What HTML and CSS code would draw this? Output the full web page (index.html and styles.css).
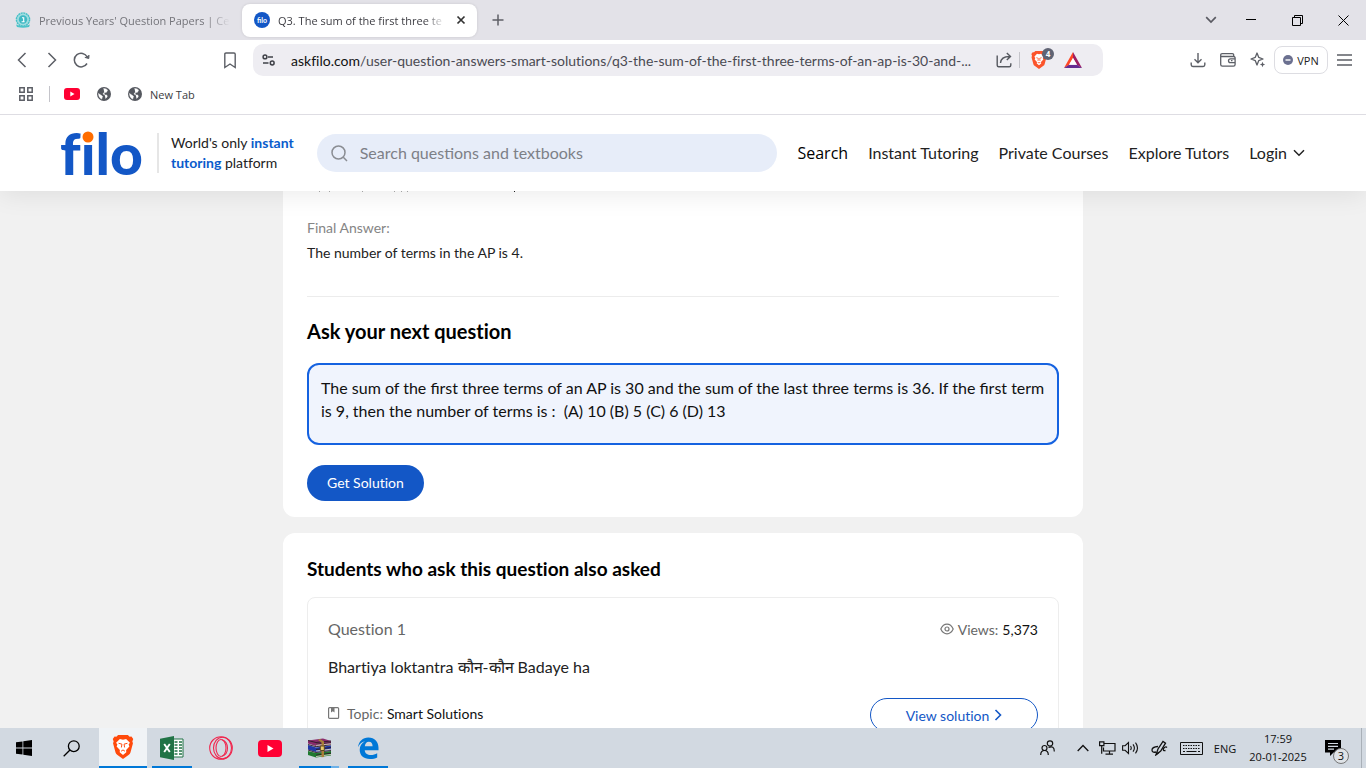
FILE: index.html
```html
<!DOCTYPE html>
<html lang="en">
<head>
  <meta charset="UTF-8" />
  <meta name="viewport" content="width=device-width, initial-scale=1.0"/>
  <title>Q3. The sum of the first three terms</title>
  <link rel="stylesheet" href="styles.css">
</head>
<body>
  <div class="tab-strip">
    <a href="#" class="tab">
      <svg width="16" height="16" viewBox="0 0 16 16"><circle cx="8" cy="7.5" r="6.6" fill="#9fdde0" stroke="#45bfc6" stroke-width="1.4" stroke-dasharray="2 .6"/><circle cx="8" cy="7.5" r="4.2" fill="#3fb9c4"/><path d="M7 5.8h1.7v3.7M6.6 9.8h3" stroke="#fff" stroke-width="1.1" fill="none"/><path d="M1 12.5q7 3 14 0l-1 2.5q-6 1.6-12 0z" fill="#4cc3c9"/></svg>
      <span class="tab-title">Previous Years' Question Papers | Ce</span>
    </a>
    <a href="#" class="tab active">
      <svg width="16" height="16" viewBox="0 0 16 16"><circle cx="8" cy="8" r="8" fill="#1357c6"/><text x="8" y="11" text-anchor="middle" class="favicon-text">filo</text></svg>
      <span class="tab-title">Q3. The sum of the first three te</span>
      <button class="tab-close" aria-label="Close tab"><svg width="10" height="10" viewBox="0 0 10 10"><path d="M1.5 1.5l7 7M8.5 1.5l-7 7" stroke="#333" stroke-width="1.7"/></svg></button>
    </a>
    <button class="new-tab" aria-label="New tab"><svg width="12" height="12" viewBox="0 0 12 12"><path d="M6 .5v11M.5 6h11" stroke="#5f5f66" stroke-width="1.5"/></svg></button>
    <div class="window-controls">
      <button class="tab-search" aria-label="Search tabs"><svg width="12" height="8" viewBox="0 0 12 8"><path d="M1.2 1.2L6 6l4.8-4.8" fill="none" stroke="#5a5a62" stroke-width="1.7"/></svg></button>
      <button aria-label="Minimize"><svg width="10" height="10" viewBox="0 0 10 10"><path d="M0 4.5h10" stroke="#000"/></svg></button>
      <button aria-label="Restore"><svg width="11" height="11" viewBox="0 0 11 11"><path d="M.5 2.5h8v8h-8zM2.5 2.5v-2h8v8h-2" fill="none" stroke="#000"/></svg></button>
      <button aria-label="Close"><svg width="11" height="11" viewBox="0 0 11 11"><path d="M.5 .5l10 10M10.5 .5l-10 10" stroke="#000"/></svg></button>
    </div>
  </div>

  <div class="toolbar">
    <button aria-label="Back"><svg width="10" height="16" viewBox="0 0 10 16"><path d="M8.5 1L1.5 8l7 7" fill="none" stroke="#5c5f66" stroke-width="1.5"/></svg></button>
    <button aria-label="Forward"><svg width="10" height="16" viewBox="0 0 10 16"><path d="M1.5 1l7 7-7 7" fill="none" stroke="#5c5f66" stroke-width="1.5"/></svg></button>
    <button aria-label="Reload"><svg width="18" height="16" viewBox="0 0 18 16"><path d="M14.2 5A6.8 6.8 0 1 0 14 11.5" fill="none" stroke="#5c5f66" stroke-width="1.5"/><path d="M11.8 5.4l4 1.1.2-3.500" fill="#5c5f66" stroke="#5c5f66"/></svg></button>
    <button class="bookmark" aria-label="Bookmark"><svg width="12" height="17" viewBox="0 0 12 17"><path d="M2 1h8q1.2 0 1.2 1.2V15.5L6 12 .8 15.5V2.2Q.8 1 2 1z" fill="none" stroke="#5c5f66" stroke-width="1.4"/></svg></button>
    <div class="address">
      <svg width="14" height="12" viewBox="0 0 14 12" fill="none" stroke="#3f4148" stroke-width="1.5"><circle cx="3" cy="2.9" r="1.9"/><path d="M6 2.9h5M1 9h5.5"/><circle cx="10.2" cy="9" r="1.9"/></svg>
      <span class="url"><b>askfilo.com</b>/user-question-answers-smart-solutions/q3-the-sum-of-the-first-three-terms-of-an-ap-is-30-and-...</span>
      <button class="share" aria-label="Share"><svg width="17" height="16" viewBox="0 0 17 16" fill="none" stroke="#55585f" stroke-width="1.4"><path d="M1.2 3.5v9.800q0 1.500 1.500 1.500h10.600q1.500 0 1.500-1.500v-2M4.500 11q.5-6.500 9-6.500M10.800 1l3.700 3.500-3.700 3.500"/></svg></button>
      <span class="divider"></span>
      <button class="shield" aria-label="Shields">
        <svg width="16" height="18" viewBox="0 0 24 27"><path d="M6.500 0h11l2 2 2-.3 2 2.800-1 2.800.7 2-2.800 10.500q-.5 1.600-1.800 2.500L12 27l-6.600-4.700q-1.300-.9-1.800-2.500L.8 9.300l.7-2-1-2.800 2-2.800 2 .3z" fill="#fb542b"/><path d="M12 5l3-.7 4 4.500-1.500 1.800 1 2-3.500 4 .3 2L12 21.500l-3.300-2.900.3-2-3.500-4 1-2L5 8.800l4-4.500z" fill="#fff"/><path d="M8 10l3 1-.5 4M16 10l-3 1 .5 4M10 17.500h4" stroke="#fb542b" stroke-width="1.200" fill="none"/></svg>
        <span class="badge">4</span>
      </button>
      <button class="rewards" aria-label="Rewards"><svg width="18" height="16" viewBox="0 0 18 16"><path d="M9 0L0 16l5-3 4-7z" fill="#ff4724"/><path d="M9 0l9 16-5-3-4-7z" fill="#9e1f63"/><path d="M0 16h18l-5-3.200H5z" fill="#662d91"/><path d="M9 6l4 6.800H5z" fill="#fff"/></svg></button>
    </div>
    <div class="tools">
      <button aria-label="Downloads"><svg width="16" height="16" viewBox="0 0 16 16" fill="none" stroke="#5c5f66" stroke-width="1.400"><path d="M8 1v9.500M4.500 7.300L8 10.700l3.500-3.400M1.200 10.500v2.300q0 1.700 1.700 1.700h10.200q1.700 0 1.700-1.700v-2.300"/></svg></button>
      <button aria-label="Wallet"><svg width="16" height="14" viewBox="0 0 16 14" fill="none" stroke="#5c5f66" stroke-width="1.300"><path d="M13.700 3.500V2.200Q13.700.7 12.200.7H2.200Q.7.700.7 2.200v9.300q0 1.700 1.700 1.700h11q1.700 0 1.700-1.700V5q0-1.500-1.500-1.500H1M15 5.800h-4.500q-2 0-2 1.900t2 1.900H15"/><path d="M11 7.700h1.500"/></svg></button>
      <button aria-label="Assistant"><svg width="16" height="16" viewBox="0 0 16 16"><path d="M7 1l1.700 4.300L13 7 8.700 8.700 7 13 5.300 8.700 1 7l4.300-1.700z" fill="none" stroke="#5c5f66" stroke-width="1.300" stroke-linejoin="round"/><path d="M12.500 9.800l.8 1.900 1.900.8-1.900.8-.8 1.900-.8-1.900-1.900-.8 1.900-.8z" fill="#5c5f66"/></svg></button>
      <button class="vpn"><svg width="10" height="10" viewBox="0 0 10 10"><circle cx="5" cy="5" r="5" fill="#6b7090"/><path d="M2.500 5h5" stroke="#fff" stroke-width="1.400"/></svg>VPN</button>
      <button aria-label="Menu"><svg width="15" height="12" viewBox="0 0 15 12"><path d="M0 1h15M0 6h15M0 11h15" stroke="#5c5f66" stroke-width="1.300"/></svg></button>
    </div>
  </div>

  <div class="bookmarks">
    <button aria-label="Apps"><svg width="14" height="14" viewBox="0 0 14 14" fill="none" stroke="#5c5f66" stroke-width="1.500"><path d="M.8.800h4.400v4.400H.8zM8.800.800h4.400v4.400H8.800zM.8 8.800h4.400v4.400H.8zM8.800 8.800h4.400v4.400H8.800z"/></svg></button>
    <span class="divider"></span>
    <a href="#" aria-label="YouTube"><svg width="16" height="12" viewBox="0 0 16 12"><rect width="16" height="12" rx="3" fill="#ff0033"/><path d="M6.300 3.500v5l4.200-2.500z" fill="#fff"/></svg></a>
    <a href="#" aria-label="Site"><svg width="14" height="14" viewBox="0 0 14 14"><circle cx="7" cy="7" r="7" fill="#55585f"/><path d="M6.500 1.500q3 0 4 1.500l-1 2.200-2.500.3-1 1.500 2 1h1.800l.4 2-1.700 1.500M1.500 6.500l4 2.800-.8 2.800Q1.500 10.500 1.500 6.500z" fill="#fff" stroke="#fff" stroke-width=".5"/></svg></a>
    <a href="#"><svg width="14" height="14" viewBox="0 0 14 14"><circle cx="7" cy="7" r="7" fill="#55585f"/><path d="M6.500 1.500q3 0 4 1.500l-1 2.200-2.500.3-1 1.500 2 1h1.800l.4 2-1.700 1.500M1.500 6.500l4 2.800-.8 2.800Q1.500 10.500 1.500 6.500z" fill="#fff" stroke="#fff" stroke-width=".5"/></svg>New Tab</a>
  </div>

  <div class="page">
    <header class="site-header">
      <a href="#" class="brand">
        <svg width="84" height="50" viewBox="0 0 84 50"><text x="-1" y="47" class="logo-text">filo</text><circle cx="27" cy="9" r="6" fill="#fff"/><circle cx="27" cy="9" r="5.500" fill="#ff6d00"/></svg>
      </a>
      <p class="tagline">World's only <b>instant</b><br><b>tutoring</b> platform</p>
      <label class="search">
        <svg width="17" height="17" viewBox="0 0 17 17" fill="none" stroke="#8a8d93" stroke-width="1.500"><circle cx="7.500" cy="7.500" r="6.500"/><path d="M12.300 12.300l3.700 3.700"/></svg>
        <input type="text" placeholder="Search questions and textbooks" aria-label="Search questions and textbooks">
      </label>
      <nav>
        <a href="#" class="current">Search</a>
        <a href="#">Instant Tutoring</a>
        <a href="#">Private Courses</a>
        <a href="#">Explore Tutors</a>
        <a href="#" class="login">Login <svg width="12" height="8" viewBox="0 0 12 8"><path d="M1 1.200l5 5 5-5" fill="none" stroke="#222" stroke-width="1.500"/></svg></a>
      </nav>
    </header>

    <main>
      <section class="card answer">
        <svg class="cut-line" width="210" height="1" viewBox="0 0 210 1"><path d="M12 .5h1M22 .5h1M55 .5h1M87 .5h1M94 .5h1M100 .5h1" stroke="#aaa"/><path d="M207 .5h1" stroke="#222"/></svg>
        <h3>Final Answer:</h3>
        <p>The number of terms in the AP is 4.</p>
        <hr>
        <h2><label for="next-question">Ask your next question</label></h2>
        <textarea id="next-question" spellcheck="false">The sum of the first three terms of an AP is 30 and the sum of the last three terms is 36. If the first term is 9, then the number of terms is :  (A) 10 (B) 5 (C) 6 (D) 13</textarea>
        <button class="get-solution">Get Solution</button>
      </section>

      <section class="card related">
        <h2>Students who ask this question also asked</h2>
        <article class="question">
          <div class="row">
            <span class="number">Question 1</span>
            <span class="meta"><svg width="14" height="12" viewBox="0 0 14 12" fill="none" stroke="#777" stroke-width="1.200"><path d="M.8 6Q3 1.200 7 1.200T13.200 6Q11 10.800 7 10.800T.8 6z"/><circle cx="7" cy="6" r="2"/></svg>Views: <b>5,373</b></span>
          </div>
          <p>Bhartiya loktantra कौन-कौन Badaye ha</p>
          <div class="row">
            <span class="meta topic"><svg width="12" height="12" viewBox="0 0 12 12"><rect x=".6" y=".6" width="10" height="10.800" rx="1" fill="none" stroke="#777" stroke-width="1.200"/><path d="M3 1h3.500v4.500L4.800 4.300 3 5.500z" fill="#777"/></svg>Topic: <b>Smart Solutions</b></span>
            <a href="#" class="view-solution">View solution <svg width="8" height="12" viewBox="0 0 8 12"><path d="M1.500 1l5 5-5 5" fill="none" stroke="#1357c6" stroke-width="1.600"/></svg></a>
          </div>
        </article>
      </section>
    </main>
  </div>

  <footer class="taskbar">
    <button class="app" aria-label="Start"><svg width="16" height="16" viewBox="0 0 16 16"><path d="M0 2.300l6.500-.9v6.200H0zM7.300 1.300L16 0v7.600H7.300zM0 8.400h6.500v6.200L0 13.700zM7.300 8.400H16V16l-8.700-1.300z"/></svg></button>
    <button class="app find" aria-label="Search"><svg width="17" height="17" viewBox="0 0 17 17" fill="none" stroke="#000" stroke-width="1.300"><circle cx="10.800" cy="6.200" r="5.400"/><path d="M7 10L.7 16.300"/></svg></button>
    <button class="app open current" aria-label="Brave"><svg width="22" height="24" viewBox="0 0 24 27"><path d="M6.500 0h11l2 2 2-.3 2 2.800-1 2.800.7 2-2.800 10.500q-.5 1.600-1.800 2.500L12 27l-6.600-4.700q-1.300-.9-1.800-2.500L.8 9.300l.7-2-1-2.800 2-2.800 2 .3z" fill="#ff4a0c"/><path d="M8.500 4.500l3.500.8 3.500-.8 4.300 4.300-1.500 2 .9 2-3.700 4.200.2 2.300L12 22.500l-3.700-3.200.2-2.300-3.700-4.200.9-2-1.500-2z" fill="#fff"/><path d="M7 9.300l3.800 1-.6 3.700M17 9.300l-3.800 1 .6 3.700M9.800 18.300l2.200-1.500 2.200 1.500" stroke="#ff4a0c" stroke-width="1.100" fill="none"/></svg></button>
    <button class="app open" aria-label="Excel"><svg width="24" height="24" viewBox="0 0 24 24"><path d="M13 3h10v18H13z" fill="#fff" stroke="#217346"/><path d="M14.500 6h3M19 6h3M14.500 9h3M19 9h3M14.500 12h3M19 12h3M14.500 15h3M19 15h3M14.500 18h3M19 18h3" stroke="#217346" stroke-width="1.500"/><path d="M0 2.700L14 0v24L0 21.300z" fill="#217346"/><path d="M4.200 8l5.600 8M9.800 8l-5.600 8" stroke="#fff" stroke-width="1.900"/></svg></button>
    <button class="app" aria-label="Opera"><svg width="24" height="24" viewBox="0 0 24 24" fill="none" stroke="#f0274e" stroke-width="1.100"><circle cx="12" cy="12" r="11.300"/><ellipse cx="13.500" cy="12" rx="9" ry="10.800"/><ellipse cx="12" cy="12" rx="5" ry="8.500"/><path d="M13 3.700q5.500 2 5.500 8.300T13 20.300"/></svg></button>
    <button class="app" aria-label="YouTube"><svg width="24" height="17" viewBox="0 0 24 17"><rect width="24" height="17" rx="4" fill="#ff0033"/><path d="M9.500 5v7l6-3.500z" fill="#fff"/></svg></button>
    <button class="app open stacked" aria-label="WinRAR"><svg width="25" height="20" viewBox="0 0 25 20"><path d="M1 2.500L16 .5l8 2.500v3.500L9 8 1 5.500z" fill="#8a2c6c"/><path d="M1 7l8 2.500L24 7.500V12L9 14l-8-2.500z" fill="#2038a8"/><path d="M1 13l8 2 15-2v4.500L9 19.500 1 17z" fill="#1f7a30"/><path d="M1 2.500L9 4.500 24 3M9 6.300l15-1.600M1 6.500L9 8.700l15-1.900M9 11.500l15-2M1 12l8 2.500 15-2M9 17.200l15-2" stroke="#2b1c26" stroke-width=".9" fill="none"/><path d="M9 7.300l15-1.500M9 13l15-1.800M9 18.500l15-2" stroke="#dcd6c8" stroke-width=".9"/><path d="M13 1l4 2.500V19l-2.500.3V4.500L11 2z" fill="#a97f38"/><path d="M13.300 8h4v4.500h-4z" fill="#e8c96a" stroke="#54401c" stroke-width=".9"/></svg></button>
    <button class="app open" aria-label="Edge"><svg width="22" height="22" viewBox="0 0 22 22"><path d="M1 10.300C1.700 4.200 5.800.4 11.300.4c6.500 0 10.200 4.600 10.200 10.400v2.500H7.700c.2 3.200 2.700 4.700 6 4.700 2.500 0 4.600-.7 6.500-1.800v4.300c-2 1-4.400 1.500-7.200 1.500-6.500 0-10.300-3.500-10.300-9.200 0-3.700 2-6.800 5.400-8.500C4.700 5.200 2.500 7 1 10.300zM7.800 9.300h7.800c0-2.700-1.200-4.500-3.700-4.500-2.400 0-3.800 1.900-4.100 4.500z" fill="#0078d7"/></svg></button>

    <div class="tray">
      <button class="people" aria-label="People"><svg width="15" height="16" viewBox="0 0 15 16" fill="none" stroke="#111" stroke-width="1.200"><circle cx="10" cy="3.500" r="2.700"/><circle cx="4.500" cy="8" r="2.500"/><path d="M.7 15q0-4.500 3.800-4.500T8.300 15M8.500 7.500q5.800-2.500 5.800 4"/></svg></button>
      <button aria-label="Show hidden icons"><svg width="12" height="8" viewBox="0 0 12 8"><path d="M.7 7L6 1.500 11.300 7" fill="none" stroke="#111" stroke-width="1.300"/></svg></button>
      <button aria-label="Network"><svg width="17" height="14" viewBox="0 0 17 14" fill="none" stroke="#111" stroke-width="1.200"><path d="M5 2.500h11v7.500H4.500V6.500M10.500 10v3M6.500 13.200h7.500M.6.800h4.300v3.900H.6zM2.700 4.700v8"/></svg></button>
      <button aria-label="Volume"><svg width="18" height="14" viewBox="0 0 18 14" fill="none" stroke="#111" stroke-width="1.100"><path d="M.6 4.700h2.500L6.500 1.500v11L3.100 9.300H.6zM8.500 5q1.500 2 0 4M11 3.300q2.800 3.700 0 7.400M13.500 1.700q4 5.300 0 10.600"/></svg></button>
      <button class="pen" aria-label="Pen"><svg width="17" height="16" viewBox="0 0 17 16" fill="none" stroke="#111" stroke-width="1.300"><path d="M5 14.800L7 9l5-7.500 2.500 1.700L9.700 11z"/><path d="M7 6.500Q1 7 1 10t4 2M16 7.500q-1.500-1.500-3.500 1-1 2.500 2 2M5 14.800l3-2.500"/></svg></button>
      <button class="keyboard" aria-label="Touch keyboard"><svg width="23" height="13" viewBox="0 0 23 13" fill="none" stroke="#111"><path d="M.5.500h22v12H.5z"/><path d="M3 3.500h17M3 6.500h17" stroke-dasharray="1.500 1"/><path d="M3 9.500h2M6.500 9.500h10M18 9.500h2"/></svg></button>
      <span class="language">ENG</span>
      <span class="clock">17:59<br>20-01-2025</span>
      <button class="notifications" aria-label="Notifications"><svg width="16" height="16" viewBox="0 0 16 16"><path d="M0 0h16v12.500H8.500L5 16v-3.500H0z"/><path d="M3 3.500h10M3 6.300h10M3 9.100h6" stroke="#d2d9e1" stroke-width="1.200"/></svg><span class="count">3</span></button>
    </div>
  </footer>
</body>
</html>
```
FILE: styles.css
```css
* {
  margin: 0;
  padding: 0;
  box-sizing: border-box;
}

body {
  display: flex;
  flex-direction: column;
  height: 100vh;
  overflow: hidden;
  font-family: Lato, sans-serif;
  font-size: 14px;
  font-variant-ligatures: none;
  color: #222;
  background: #fff;
}

a {
  color: inherit;
  text-decoration: none;
}

button {
  display: flex;
  align-items: center;
  justify-content: center;
  border: none;
  background: none;
  color: inherit;
  font: inherit;
}

svg {
  flex: none;
}

.tab-strip,
.toolbar,
.bookmarks,
.taskbar {
  display: flex;
  align-items: center;
  flex: none;
  font-family: "Open Sans", sans-serif;
  font-size: 11px;
}

/* tabs */
.tab-strip {
  height: 40px;
  padding-left: 3px;
  background: #e3e2e8;
}

.tab {
  display: flex;
  align-items: center;
  gap: 8px;
  width: 239px;
  height: 33px;
  padding: 0 12px;
  border-radius: 8px;
  color: #74747a;
}

.tab.active {
  width: 235px;
  padding-right: 8px;
  background: #fff;
  color: #3c3c42;
  box-shadow: 0 0 3px rgba(0,0,0,0.12);
}

.tab-title {
  flex: 1;
  white-space: nowrap;
  -webkit-mask-image: linear-gradient(90deg, #000 88%, transparent);
  mask-image: linear-gradient(90deg, #000 88%, transparent);
}

.tab-close {
  width: 16px;
  height: 16px;
}

.new-tab {
  width: 42px;
  height: 40px;
}

.favicon-text {
  font: 700 7px Lato, sans-serif;
  fill: #fff;
}

.window-controls {
  display: flex;
  margin-left: auto;
}

.window-controls button {
  width: 46px;
  height: 40px;
}

.window-controls .tab-search {
  width: 34px;
}

/* address bar */
.toolbar {
  height: 40px;
  padding: 0 7px;
}

.toolbar button {
  width: 30px;
  height: 30px;
}

.toolbar .bookmark {
  margin-left: 118px;
}

.address {
  display: flex;
  align-items: center;
  flex: 1;
  min-width: 0;
  height: 32px;
  margin: 0 80px 0 8px;
  padding: 0 15px 0 9px;
  border-radius: 10px;
  background: #eeedf2;
}

.url {
  flex: 1;
  min-width: 0;
  margin-left: 15px;
  overflow: hidden;
  white-space: nowrap;
  font-family: Lato, sans-serif;
  font-size: 14px;
  color: #4a4a52;
}

.url b {
  font-weight: 400;
  color: #111;
}

.divider {
  width: 1px;
  height: 16px;
  background: #c4c4ca;
}

.toolbar .shield {
  position: relative;
  width: 38px;
}

.badge {
  position: absolute;
  top: 3px;
  right: 4px;
  width: 12px;
  height: 12px;
  border-radius: 6px;
  background: #5f6373;
  color: #fff;
  font-size: 8px;
  font-weight: 700;
  line-height: 12px;
}

.tools {
  display: flex;
  align-items: center;
}

.toolbar .vpn {
  gap: 4px;
  width: 54px;
  height: 28px;
  margin: 0 1px;
  border: 1px solid #dddde2;
  border-radius: 8px;
}

.bookmarks {
  gap: 17px;
  height: 35px;
  padding: 0 19px 6px;
  border-bottom: 1px solid #dedde3;
  color: #3c3c42;
}

.bookmarks .divider {
  margin: 0 -3px 0 -1px;
}

.bookmarks a {
  display: flex;
  align-items: center;
  gap: 8px;
}

/* web page */
.page {
  flex: 1;
  min-height: 0;
  overflow: hidden;
  background: #f1f1f1;
}

.site-header {
  position: relative;
  display: flex;
  align-items: center;
  height: 76px;
  padding: 0 61px;
  background: #fff;
  box-shadow: 0 4px 24px rgba(0,0,0,0.08);
}

.brand {
  display: flex;
}

.logo-text {
  font: 900 57px Lato, sans-serif;
  font-variant-ligatures: none;
  fill: #1357c6;
}

.tagline {
  margin-left: 12px;
  padding-left: 12px;
  border-left: 2px solid #e6e6e6;
  line-height: 20px;
}

.tagline b {
  color: #0a5ccc;
}

.search {
  display: flex;
  align-items: center;
  flex: 1;
  gap: 12px;
  height: 38px;
  margin: 0 20px 0 23px;
  padding: 0 14px;
  border-radius: 19px;
  background: #e7edf9;
}

.search input {
  flex: 1;
  min-width: 0;
  padding-bottom: 2px;
  border: none;
  outline: none;
  background: none;
  font: 16px Lato, sans-serif;
}

.search input::placeholder {
  color: #7d8087;
}

nav {
  display: flex;
  align-items: baseline;
  gap: 20px;
  font-size: 16px;
}

nav .current {
  font-family: "Open Sans", sans-serif;
  color: #000;
}

.login {
  display: flex;
  align-items: center;
  gap: 6px;
}

main {
  display: flex;
  flex-direction: column;
  gap: 16px;
  max-width: 800px;
  margin: 0 auto;
}

.card {
  padding: 24px;
  border-radius: 12px;
  background: #fff;
}

.answer {
  padding: 0 24px 16px;
  border-radius: 0 0 12px 12px;
}

.cut-line {
  display: block;
}

h3 {
  margin-top: 26px;
  font-size: 14px;
  font-weight: 400;
  line-height: 20px;
  color: #858585;
}

.answer p {
  margin-top: 5px;
  line-height: 20px;
}

hr {
  margin: 33px 0 20px;
  border: none;
  border-top: 1px solid #ececec;
}

h2 {
  font-size: 20px;
  font-weight: 700;
  line-height: 28px;
  color: #000;
}

textarea {
  display: block;
  width: 100%;
  height: 82px;
  margin: 18px 0 20px;
  padding: 11px 8px 11px 12px;
  border: 2px solid #1562e0;
  border-radius: 12px;
  outline: none;
  background: #f0f4fd;
  color: #111;
  font: 16px/23px Lato, sans-serif;
  resize: none;
  overflow: hidden;
}

.get-solution {
  height: 36px;
  padding: 0 20px 2px;
  border-radius: 18px;
  background: #1357c6;
  color: #fff;
}

.related {
  padding-top: 22px;
}

.related h2 {
  font-size: 19px;
}

.question {
  margin-top: 14px;
  padding: 19px 20px;
  border: 1px solid #ededed;
  border-radius: 8px;
}

.row {
  display: flex;
  justify-content: space-between;
}

.number {
  font-size: 16px;
  line-height: 24px;
  color: #666;
}

.question p {
  margin: 14px 0 19px;
  font-size: 16px;
  line-height: 24px;
}

.meta {
  display: flex;
  align-items: center;
  gap: 4px;
  color: #666;
}

.meta b {
  font-weight: 400;
  color: #111;
}

.topic {
  height: 30px;
}

.topic svg {
  margin-right: 3px;
}

.view-solution {
  display: flex;
  align-items: center;
  justify-content: center;
  gap: 5px;
  width: 168px;
  height: 34px;
  border: 1px solid #1357c6;
  border-radius: 17px;
  color: #1357c6;
}

/* windows taskbar */
.taskbar {
  gap: 1px;
  height: 40px;
  background: #d2d9e1;
  color: #111;
}

.app {
  width: 48px;
  height: 40px;
}

.find {
  margin-right: 1px;
  padding-right: 3px;
}

.open {
  background: linear-gradient(#0078d7, #0078d7) bottom / 40px 2px no-repeat;
}

.open.current {
  background: #f0f3f6;
  border-bottom: 2px solid #0078d7;
}

.open.stacked {
  background: linear-gradient(90deg, #0078d7 80%, #6db1e8 80%) bottom / 40px 2px no-repeat;
}

.tray {
  display: flex;
  align-items: center;
  margin-left: auto;
}

.tray button {
  width: 24px;
  height: 40px;
}

.tray .people {
  margin-right: 12px;
}

.tray .pen,
.tray .keyboard {
  width: 32px;
}

.language {
  width: 36px;
  text-align: center;
}

.clock {
  width: 70px;
  line-height: 18px;
  text-align: center;
}

.tray .notifications {
  position: relative;
  width: 49px;
  margin-right: 4px;
  padding-right: 8px;
  border-right: 1px solid #a9b0b8;
}

.count {
  position: absolute;
  left: 20px;
  bottom: 4px;
  width: 16px;
  height: 16px;
  border: 1px solid #777;
  border-radius: 8px;
  background: #dfe3e7;
  line-height: 14px;
}
```
